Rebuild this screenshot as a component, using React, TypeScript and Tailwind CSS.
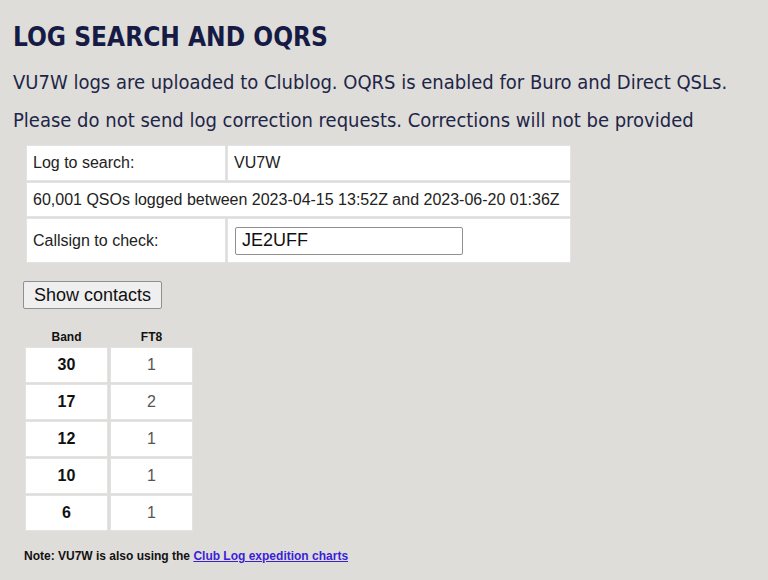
import React from 'react';

const bands = [
  { band: '30', ft8: 1 },
  { band: '17', ft8: 2 },
  { band: '12', ft8: 1 },
  { band: '10', ft8: 1 },
  { band: '6', ft8: 1 },
];

export default function App() {
  return (
    <div className="min-h-[580px] w-[768px] bg-[#dfddd9] pl-[13px] pt-[19px] font-['Liberation_Sans',Arial,sans-serif]">
      {/* Heading and intro */}
      <h1 className="font-['DejaVu_Sans_Condensed','DejaVu_Sans',sans-serif] text-[26px] font-bold leading-[36px] text-[#161b45]">
        LOG SEARCH AND OQRS
      </h1>
      <p className="mt-[13px] font-['DejaVu_Sans_Condensed','DejaVu_Sans',sans-serif] text-[20px] leading-[28px] text-[#1d2648]">
        VU7W logs are uploaded to Clublog. OQRS is enabled for Buro and Direct QSLs.
      </p>
      <p className="mt-[10px] font-['DejaVu_Sans_Condensed','DejaVu_Sans',sans-serif] text-[20px] leading-[28px] text-[#1d2648]">
        Please do not send log correction requests. Corrections will not be provided
      </p>

      {/* Search form */}
      <table className="mt-[10px] ml-[12px] border-separate border-spacing-[1px] text-[16px] text-[#222]">
        <tbody>
          <tr>
            <td className="h-[36px] w-[200px] border border-[#e3e3e3] bg-white px-[6px]">Log to search:</td>
            <td className="h-[36px] w-[344px] border border-[#e3e3e3] bg-white px-[6px]">VU7W</td>
          </tr>
          <tr>
            <td colSpan={2} className="h-[35px] border border-[#e3e3e3] bg-white px-[6px]">
              60,001 QSOs logged between 2023-04-15 13:52Z and 2023-06-20 01:36Z
            </td>
          </tr>
          <tr>
            <td className="h-[45px] border border-[#e3e3e3] bg-white px-[6px]">Callsign to check:</td>
            <td className="h-[45px] border border-[#e3e3e3] bg-white px-[7px]">
              <input
                defaultValue="JE2UFF"
                className="h-[28px] w-[228px] rounded-[2px] border border-[#8f8f8f] bg-white px-[6px] text-[18px] text-[#111] outline-none"
              />
            </td>
          </tr>
        </tbody>
      </table>

      <button className="mt-[17px] ml-[10px] h-[28px] rounded-[2px] border border-[#8f8f8f] bg-[#efefef] px-[10px] text-[18px] leading-none text-[#111]">
        Show contacts
      </button>

      {/* Results */}
      <table className="mt-[17px] ml-[10px] border-separate border-spacing-x-[2px] border-spacing-y-[1px] text-center">
        <thead>
          <tr>
            <th className="h-[19px] text-[12px] font-bold text-[#111]">Band</th>
            <th className="h-[19px] text-[12px] font-bold text-[#111]">FT8</th>
          </tr>
        </thead>
        <tbody>
          {bands.map((r) => (
            <tr key={r.band}>
              <td className="h-[36px] w-[83px] border border-[#e3e3e3] bg-white text-[16px] font-bold text-[#111]">
                {r.band}
              </td>
              <td className="h-[36px] w-[83px] border border-[#e3e3e3] bg-white text-[16px] text-[#555]">{r.ft8}</td>
            </tr>
          ))}
        </tbody>
      </table>

      <p className="mt-[15px] ml-[11px] text-[12px] font-bold text-[#111]">
        Note: VU7W is also using the{' '}
        <a href="#" className="text-[#3b1fd8] underline">
          Club Log expedition charts
        </a>
      </p>
    </div>
  );
}
